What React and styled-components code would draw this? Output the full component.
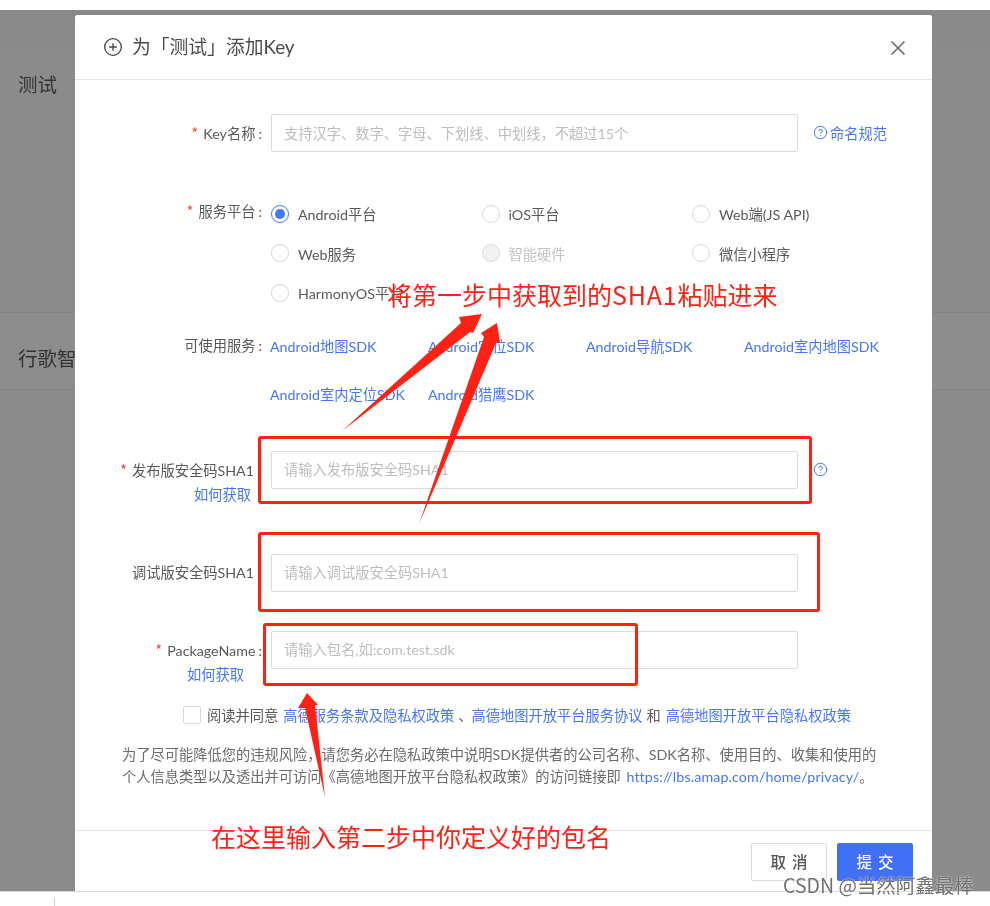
import React from 'react';
import styled, {createGlobalStyle} from 'styled-components';
import {CirclePlus, CircleHelp} from 'lucide-react';

const GlobalStyle = createGlobalStyle`
  html, body {
    margin: 0;
    padding: 0;
    background: #ffffff;
  }
  body {
    font-family: Lato, "Noto Sans CJK SC", sans-serif;
    font-size: 14.25px;
    color: #595959;
  }
`;

const blue = '#4676f6';
const red = '#ff2113';

const Page = styled.div`
  position: relative;
  width: 990px;
  height: 906px;
  padding-top: 10px;
  box-sizing: border-box;
  overflow: hidden;
  background: #ffffff;
  filter: blur(0.45px);
`;

const Backdrop = styled.div`
  position: relative;
  height: 881px;
  overflow: hidden;
  background: #8a8b8a;
`;

const TopBand = styled.div`
  height: 37px;
  background: #888988;
`;

const BehindRow = styled.div`
  height: ${p => p.$height}px;
  margin-top: ${p => p.$top}px;
  padding-top: ${p => p.$shift}px;
  box-sizing: border-box;
  padding-left: 18px;
  display: flex;
  align-items: center;
  font-size: 19.5px;
  white-space: nowrap;
  color: #333333;
  background: ${p => p.$raised ? '#8c8d8c' : 'transparent'};
  border-top: ${p => p.$raised ? '1px solid #848584' : 'none'};
  border-bottom: ${p => p.$raised ? '1px solid #848584' : 'none'};
`;

const Modal = styled.div`
  position: absolute;
  left: 75px;
  top: 5px;
  width: 857px;
  background: #ffffff;
  border-radius: 2px 2px 0 0;
`;

const Header = styled.div`
  height: 64px;
  padding: 0 26px 0 28px;
  display: flex;
  align-items: center;
  gap: 9px;
  border-bottom: 1px solid #e6e6e6;
  font-size: 18.8px;
  color: #4a4a4a;
`;

const Title = styled.span`
  flex: 1;
  margin-top: -4px;
`;

const CloseSvg = styled.svg`
  margin-top: 1px;
`;

const CloseIcon = () => (
    <CloseSvg width='16' height='16' viewBox='0 0 16 16' fill='none' stroke='#666666' strokeWidth='1.5'>
        <path d='M1.5 1.5 L14.5 14.5 M14.5 1.5 L1.5 14.5'/>
    </CloseSvg>
);

const Form = styled.div`
  padding-top: 34px;
`;

const Row = styled.div`
  display: grid;
  grid-template-columns: 196px auto;
  justify-content: start;
  margin-top: ${p => p.$top || 0}px;
`;

const LabelCol = styled.div`
  display: flex;
  flex-direction: column;
  align-items: flex-end;
`;

const Label = styled.div`
  height: ${p => p.$height || 38}px;
  line-height: ${p => p.$height || 38}px;
  padding-right: ${p => p.$pad === undefined ? 9 : p.$pad}px;
  white-space: nowrap;
`;

const Star = styled.span`
  font-family: "Noto Sans CJK SC", sans-serif;
  font-size: 15px;
  color: #f5503c;
  margin-right: 5px;
`;

const Colon = styled.span`
  margin-left: 3px;
`;

const HowTo = styled.a`
  margin-top: -4px;
  padding-right: ${p => p.$pad}px;
  line-height: 20px;
  color: ${blue};
`;

const FieldLine = styled.div`
  display: flex;
  align-items: center;
  gap: 15px;
  height: 38px;
`;

const Field = styled.input`
  width: 527px;
  height: 38px;
  box-sizing: border-box;
  padding: 0 12px;
  border: 1px solid #dcdcdc;
  border-radius: 2px;
  outline: none;
  font: inherit;
  color: #595959;

  &::placeholder {
    color: #bdbdbd;
    opacity: 1;
  }
`;

const HelpLink = styled.a`
  display: flex;
  align-items: center;
  gap: 2px;
  margin-bottom: 1px;
  color: ${blue};
  white-space: nowrap;
`;

const RadioGrid = styled.div`
  display: grid;
  grid-template-columns: repeat(3, 210.5px);
  grid-auto-rows: 39.5px;
`;

const RadioItem = styled.label`
  display: flex;
  align-items: center;
  gap: 9px;
  white-space: nowrap;
  color: ${p => p.$disabled ? '#c4c4c4' : '#595959'};
`;

const RadioMark = styled.span`
  width: 18px;
  height: 18px;
  box-sizing: border-box;
  display: flex;
  align-items: center;
  justify-content: center;
  border-radius: 50%;
  border: 1px solid ${p => p.$checked ? blue : '#d9d9d9'};
  background: ${p => p.$disabled ? '#f2f2f2' : '#ffffff'};

  &::after {
    content: '';
    display: ${p => p.$checked ? 'block' : 'none'};
    width: 10px;
    height: 10px;
    border-radius: 50%;
    background: ${blue};
  }
`;

const ServiceGrid = styled.div`
  display: grid;
  grid-template-columns: repeat(4, 158px);
  grid-auto-rows: 48px;
  align-items: center;
  margin-left: -1px;
`;

const ServiceLink = styled.a`
  color: ${blue};
  white-space: nowrap;
`;

const AgreeRow = styled.div`
  display: flex;
  align-items: center;
  height: 18px;
  margin-top: 21px;
  padding-left: 108px;
  white-space: nowrap;
`;

const Check = styled.span`
  width: 18px;
  height: 18px;
  box-sizing: border-box;
  margin-right: 6px;
  border: 1px solid #d9d9d9;
  border-radius: 2px;
`;

const AgreeLink = styled.a`
  color: ${blue};
  margin: 0 4px 0 5px;
`;

const Dun = styled.span`
  margin-right: -6px;
`;

const Notes = styled.div`
  margin-top: 20px;
  padding-left: 47px;
  line-height: 22px;
  color: #6b6b6b;
  white-space: nowrap;
`;

const NoteLink = styled.a`
  margin-left: 2px;
  letter-spacing: 0.12px;
  color: ${blue};
`;

const Footer = styled.div`
  margin-top: 42px;
  padding: 12px 19px 12px 0;
  display: flex;
  justify-content: flex-end;
  gap: 10px;
  border-top: 1px solid #e6e6e6;
`;

const Button = styled.button`
  width: 76px;
  height: 38px;
  box-sizing: border-box;
  border-radius: 2px;
  border: 1px solid ${p => p.$primary ? '#3f70f6' : '#dcdcdc'};
  background: ${p => p.$primary ? '#3f70f6' : '#ffffff'};
  color: ${p => p.$primary ? '#ffffff' : '#555555'};
  font: inherit;
  font-size: 15.5px;
  font-weight: 500;
  letter-spacing: 6px;
  padding: 0 0 2px 6px;
`;

const BottomBar = styled.div`
  height: 15px;
  box-sizing: border-box;
  border-top: 1px solid #d8d8d8;
  padding: 6px 0 0 54px;
`;

const Tick = styled.div`
  width: 1px;
  height: 9px;
  background: #cfcfcf;
`;

// annotations drawn on top of the screenshot
const RedBox = styled.div`
  position: absolute;
  left: ${p => p.$x}px;
  top: ${p => p.$y}px;
  width: ${p => p.$w}px;
  height: ${p => p.$h}px;
  box-sizing: border-box;
  border: 3px solid ${red};
  border-radius: 3px;
`;

const RedNote = styled.div`
  position: absolute;
  left: ${p => p.$x}px;
  top: ${p => p.$y}px;
  font-family: "Noto Sans CJK SC", sans-serif;
  font-size: 25px;
  line-height: 34px;
  color: ${red};
  white-space: nowrap;
`;

const WideLatin = styled.span`
  letter-spacing: 0.8px;
`;

const Arrows = styled.svg`
  position: absolute;
  left: 0;
  top: 0;
`;

const Watermark = styled.div`
  position: absolute;
  left: 783px;
  top: 871px;
  font-family: "Noto Sans CJK SC", sans-serif;
  font-size: 19.5px;
  line-height: 28px;
  color: #707070;
  text-shadow: 0 0 2px #ffffff;
  white-space: nowrap;
`;

const HELP_SIZE = 15;

const platforms = [
    {name: 'Android平台', checked: true},
    {name: 'iOS平台'},
    {name: 'Web端(JS API)'},
    {name: 'Web服务'},
    {name: '智能硬件', disabled: true},
    {name: '微信小程序'},
    {name: 'HarmonyOS平台'}
];

const services = [
    'Android地图SDK',
    'Android定位SDK',
    'Android导航SDK',
    'Android室内地图SDK',
    'Android室内定位SDK',
    'Android猎鹰SDK'
];

const App = () => {
    return (
        <Page>
            <GlobalStyle/>
            <Backdrop>
                <TopBand/>
                <BehindRow $height={72} $top={0} $shift={0}>测试</BehindRow>
                <BehindRow $height={78} $top={193} $shift={12} $raised>行歌智能</BehindRow>
                <Modal>
                    <Header>
                        <CirclePlus size={20} strokeWidth={1.6} color='#444444'/>
                        <Title>为「测试」添加Key</Title>
                        <CloseIcon/>
                    </Header>
                    <Form>
                        <Row>
                            <LabelCol>
                                <Label><Star>*</Star>Key名称<Colon>:</Colon></Label>
                            </LabelCol>
                            <FieldLine>
                                <Field readOnly placeholder='支持汉字、数字、字母、下划线、中划线，不超过15个'/>
                                <HelpLink><CircleHelp size={HELP_SIZE} strokeWidth={1.6}/>命名规范</HelpLink>
                            </FieldLine>
                        </Row>
                        <Row $top={42}>
                            <LabelCol>
                                <Label $height={34}><Star>*</Star>服务平台<Colon>:</Colon></Label>
                            </LabelCol>
                            <RadioGrid>
                                {platforms.map(item => (
                                    <RadioItem key={item.name} $disabled={item.disabled}>
                                        <RadioMark $checked={item.checked} $disabled={item.disabled}/>
                                        {item.name}
                                    </RadioItem>
                                ))}
                            </RadioGrid>
                        </Row>
                        <Row $top={9}>
                            <LabelCol>
                                <Label $height={48}>可使用服务<Colon>:</Colon></Label>
                            </LabelCol>
                            <ServiceGrid>
                                {services.map(name => <ServiceLink key={name}>{name}</ServiceLink>)}
                            </ServiceGrid>
                        </Row>
                        <Row $top={33}>
                            <LabelCol>
                                <Label $pad={17}><Star>*</Star>发布版安全码SHA1</Label>
                                <HowTo $pad={20}>如何获取</HowTo>
                            </LabelCol>
                            <FieldLine>
                                <Field readOnly placeholder='请输入发布版安全码SHA1'/>
                                <HelpLink><CircleHelp size={HELP_SIZE} strokeWidth={1.6}/></HelpLink>
                            </FieldLine>
                        </Row>
                        <Row $top={49}>
                            <LabelCol>
                                <Label $pad={17}>调试版安全码SHA1</Label>
                            </LabelCol>
                            <FieldLine>
                                <Field readOnly placeholder='请输入调试版安全码SHA1'/>
                            </FieldLine>
                        </Row>
                        <Row $top={39}>
                            <LabelCol>
                                <Label><Star>*</Star>PackageName<Colon>:</Colon></Label>
                                <HowTo $pad={27}>如何获取</HowTo>
                            </LabelCol>
                            <FieldLine>
                                <Field readOnly placeholder='请输入包名,如:com.test.sdk'/>
                            </FieldLine>
                        </Row>
                        <AgreeRow>
                            <Check/>
                            阅读并同意
                            <AgreeLink>高德服务条款及隐私权政策</AgreeLink>
                            <Dun>、</Dun>
                            <AgreeLink>高德地图开放平台服务协议</AgreeLink>
                            和
                            <AgreeLink>高德地图开放平台隐私权政策</AgreeLink>
                        </AgreeRow>
                        <Notes>
                            <div>为了尽可能降低您的违规风险，请您务必在隐私政策中说明SDK提供者的公司名称、SDK名称、使用目的、收集和使用的</div>
                            <div>个人信息类型以及透出并可访问《高德地图开放平台隐私权政策》的访问链接即 <NoteLink>https://lbs.amap.com/home/privacy/</NoteLink>。</div>
                        </Notes>
                    </Form>
                    <Footer>
                        <Button>取消</Button>
                        <Button $primary>提交</Button>
                    </Footer>
                </Modal>
            </Backdrop>
            <BottomBar>
                <Tick/>
            </BottomBar>

            <RedBox $x={258} $y={436} $w={554} $h={68}/>
            <RedBox $x={258} $y={532} $w={562} $h={80}/>
            <RedBox $x={263} $y={623} $w={375} $h={63}/>
            <Arrows width='990' height='906' viewBox='0 0 990 906' fill={red}>
                <polygon points='342,431 461,323 459,317 482,314 473,333 470,332'/>
                <polygon points='419,524 484,337 481,333 497,323 500,342 496,343'/>
                <polygon points='325,797 305,708 298,708 307,693 318,705 315,705'/>
            </Arrows>
            <RedNote $x={387} $y={277}>将第一步中获取到的<WideLatin>SHA1</WideLatin>粘贴进来</RedNote>
            <RedNote $x={211} $y={819}>在这里输入第二步中你定义好的包名</RedNote>
            <Watermark>CSDN @当然阿鑫最棒</Watermark>
        </Page>
    );
};

export default App;
